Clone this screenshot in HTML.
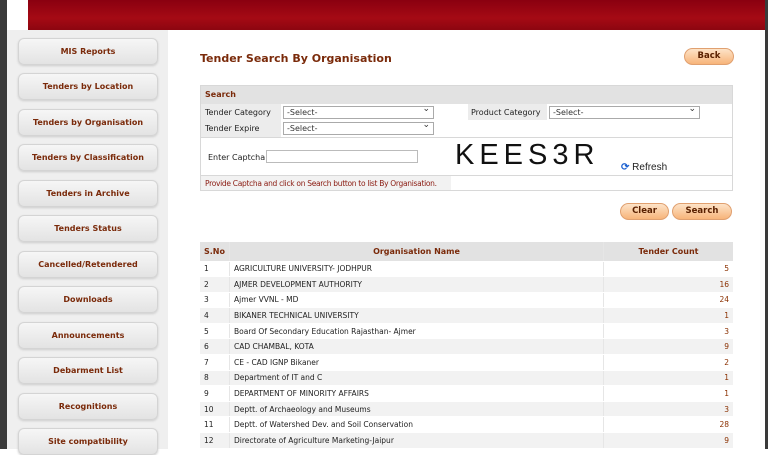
<!DOCTYPE html>
<html><head><meta charset="utf-8"><style>
*{margin:0;padding:0;box-sizing:border-box}
body{width:768px;height:449px;overflow:hidden;background:#fff;font-family:"DejaVu Sans","Liberation Sans",sans-serif;position:relative}
.a{position:absolute}
.lstrip{left:0;top:0;width:7px;height:449px;background:#3a3a3a}
.rstrip{left:765px;top:0;width:3px;height:449px;background:#3a3a3a}
.hdr{left:28px;top:0;width:737px;height:30px;background:linear-gradient(#8a0010,#a50a14 60%,#8c0610)}
.side{left:7px;top:30px;width:161px;height:419px;background:#efefef}
.nb{position:absolute;left:18px;width:140px;height:27px;border:1px solid #d4d4d4;border-radius:6px;background:linear-gradient(#f6f6f6,#e3e3e3);box-shadow:0 1px 2px #ccc;font-size:8px;font-weight:bold;color:#7a2a0a;text-align:center;line-height:25px}
.title{left:200px;top:52px;font-size:11px;font-weight:bold;color:#7a2a0a}
.pb{position:absolute;height:17px;border:1px solid #e0a070;border-radius:9px;background:linear-gradient(#fde3c8,#f7b47a);font-size:8.5px;font-weight:bold;color:#5a2000;text-align:center;line-height:15px}
.panel{left:200px;top:85px;width:533px;height:106px;border:1px solid #d8d8d8}
.lbl{font-size:8px;color:#222;white-space:nowrap}
.sel{position:absolute;height:13px;border:1px solid #aaa;background:#fff;font-size:8px;color:#333;padding-left:3px;line-height:11px}
.sel:after{content:"⌄";position:absolute;right:3px;top:-3px;font-size:9px}
table{border-collapse:collapse;font-size:7.5px;color:#222}
td{height:15.6px;padding:0 4px;border-bottom:1px solid #fff}
tr:nth-child(odd) td{background:#f2f2f2}
td:nth-child(2){border-left:1px solid #e6e6e6;border-right:1px solid #e6e6e6}
td:nth-child(3){text-align:right;color:#8a3000}
</style></head><body>
<div class="a lstrip"></div><div class="a rstrip"></div>
<div class="a hdr"></div>
<div class="a side"></div>
<div class="nb" style="top:38px">MIS Reports</div>
<div class="nb" style="top:73px">Tenders by Location</div>
<div class="nb" style="top:109px">Tenders by Organisation</div>
<div class="nb" style="top:144px">Tenders by Classification</div>
<div class="nb" style="top:180px">Tenders in Archive</div>
<div class="nb" style="top:215px">Tenders Status</div>
<div class="nb" style="top:251px">Cancelled/Retendered</div>
<div class="nb" style="top:286px">Downloads</div>
<div class="nb" style="top:322px">Announcements</div>
<div class="nb" style="top:357px">Debarment List</div>
<div class="nb" style="top:393px">Recognitions</div>
<div class="nb" style="top:428px">Site compatibility</div>

<div class="a title">Tender Search By Organisation</div>
<div class="pb" style="left:684px;top:48px;width:50px">Back</div>

<div class="a panel">
 <div class="a" style="left:0;top:0;width:531px;height:18px;background:#e2e2e2;font-size:8px;font-weight:bold;color:#7a2a0a;padding:4px 0 0 4px">Search</div>
 <div class="a" style="left:0;top:18px;width:80px;height:33px;background:#ececec"></div>
 <div class="a" style="left:267px;top:18px;width:79px;height:16px;background:#ececec"></div>
 <div class="a lbl" style="left:4px;top:22px">Tender Category</div>
 <div class="a lbl" style="left:4px;top:38px">Tender Expire</div>
 <div class="sel" style="left:82px;top:20px;width:151px">-Select-</div>
 <div class="sel" style="left:82px;top:36px;width:151px">-Select-</div>
 <div class="a lbl" style="left:270px;top:22px">Product Category</div>
 <div class="sel" style="left:348px;top:20px;width:151px">-Select-</div>
 <div class="a" style="left:0;top:51px;width:531px;border-top:1px solid #d8d8d8"></div>
 <div class="a lbl" style="left:7px;top:67px">Enter Captcha</div>
 <div class="a" style="left:65px;top:64px;width:152px;height:13px;border:1px solid #bbb"></div>
 <div class="a" style="left:254px;top:53px;font-family:'Liberation Sans',sans-serif;font-size:29px;color:#111;letter-spacing:5px;line-height:32px">KEES3R</div>
 <div class="a" style="left:420px;top:76px;font-family:'Liberation Sans',sans-serif;font-size:10px;color:#222;white-space:nowrap"><span style="color:#1a5fd0;font-weight:bold">⟳</span> Refresh</div>
 <div class="a" style="left:0;top:89px;width:531px;border-top:1px solid #d8d8d8"></div>
 <div class="a" style="left:0;top:90px;width:250px;height:14px;background:#f2f2f2;font-size:7.5px;color:#8a1a10;padding:3px 0 0 4px;white-space:nowrap;letter-spacing:-0.3px">Provide Captcha and click on Search button to list By Organisation.</div>
</div>

<div class="pb" style="left:620px;top:203px;width:49px">Clear</div>
<div class="pb" style="left:672px;top:203px;width:60px">Search</div>

<table class="a" style="left:200px;top:242px;width:533px">
<tr><td style="width:25px;height:19px;background:#e2e2e2;font-weight:bold;color:#7a2a0a;font-size:8px">S.No</td><td style="text-align:center;height:19px;background:#e2e2e2;font-weight:bold;color:#7a2a0a;font-size:8px;width:374px">Organisation Name</td><td style="text-align:center;height:19px;background:#e2e2e2;font-weight:bold;color:#7a2a0a;font-size:8px">Tender Count</td></tr>
<tr><td>1</td><td>AGRICULTURE UNIVERSITY- JODHPUR</td><td>5</td></tr>
<tr><td>2</td><td>AJMER DEVELOPMENT AUTHORITY</td><td>16</td></tr>
<tr><td>3</td><td>Ajmer VVNL - MD</td><td>24</td></tr>
<tr><td>4</td><td>BIKANER TECHNICAL UNIVERSITY</td><td>1</td></tr>
<tr><td>5</td><td>Board Of Secondary Education Rajasthan- Ajmer</td><td>3</td></tr>
<tr><td>6</td><td>CAD CHAMBAL, KOTA</td><td>9</td></tr>
<tr><td>7</td><td>CE - CAD IGNP Bikaner</td><td>2</td></tr>
<tr><td>8</td><td>Department of IT and C</td><td>1</td></tr>
<tr><td>9</td><td>DEPARTMENT OF MINORITY AFFAIRS</td><td>1</td></tr>
<tr><td>10</td><td>Deptt. of Archaeology and Museums</td><td>3</td></tr>
<tr><td>11</td><td>Deptt. of Watershed Dev. and Soil Conservation</td><td>28</td></tr>
<tr><td>12</td><td>Directorate of Agriculture Marketing-Jaipur</td><td>9</td></tr>
</table>
</body></html>
